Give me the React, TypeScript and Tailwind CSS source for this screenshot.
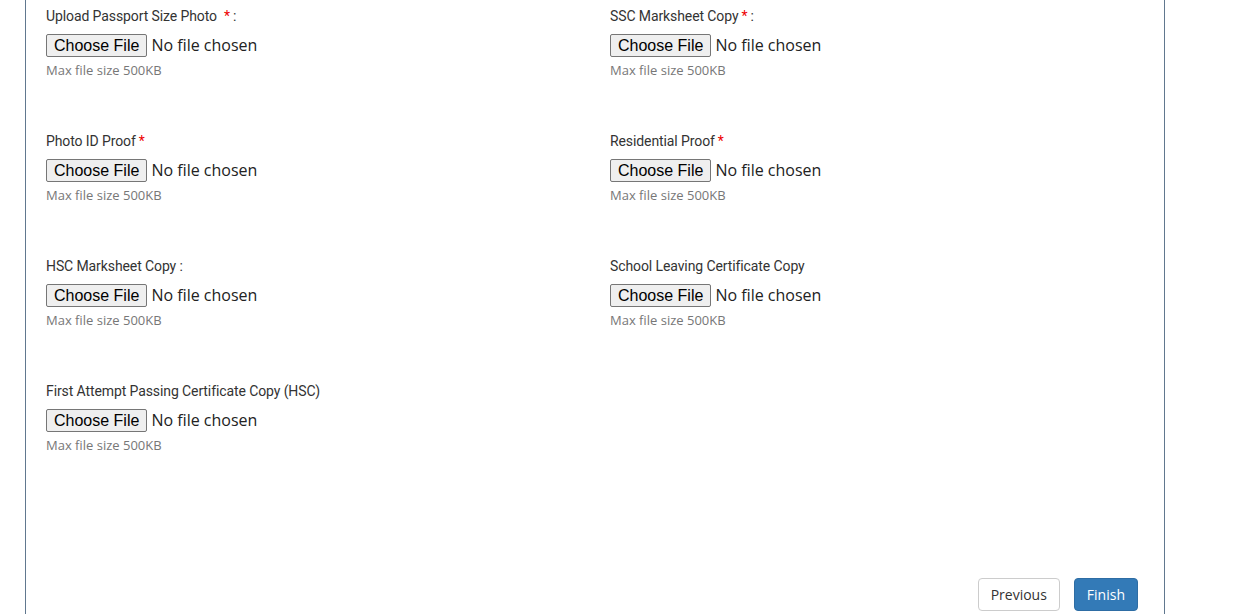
const fields = [
  { label: "Upload Passport Size Photo", mark: " *", tail: ":" , gap: true },
  { label: "SSC Marksheet Copy", mark: "*", tail: " :" },
  { label: "Photo ID Proof", mark: "*", tail: "" },
  { label: "Residential Proof", mark: "*", tail: "" },
  { label: "HSC Marksheet Copy :", mark: "", tail: "" },
  { label: "School Leaving Certificate Copy", mark: "", tail: "" },
  { label: "First Attempt Passing Certificate Copy (HSC)", mark: "", tail: "" },
]

function FileField({ label, mark, tail, gap }: { label: string; mark: string; tail: string; gap?: boolean }) {
  return (
    <div className="h-[125px]">
      <label className="block h-5 font-['Roboto',sans-serif] text-[14px] leading-5 tracking-[-0.1px] text-[#333]">
        {label}
        {mark && <span className={"text-[#e00] " + (gap ? "ml-[7px]" : "ml-[3px]")}>*</span>}
        {tail && <span className="ml-[3px]">{tail.trim()}</span>}
      </label>
      <input
        type="file"
        className="mt-2 block h-[24px] w-[300px] font-['Open_Sans',sans-serif] text-[16px] leading-[23px] text-[#222] file:mr-1 file:h-[23px] file:rounded-[2px] file:border file:border-solid file:border-[#767676] file:bg-[#efefef] file:px-[7px] file:font-['Liberation_Sans',sans-serif] file:text-[16px] file:leading-[19px] file:text-black"
      />
      <p className="mt-[3px] font-['Open_Sans',sans-serif] text-[13px] leading-[18px] text-[#777]">
        Max file size 500KB
      </p>
    </div>
  )
}

export default function App() {
  return (
    <div className="h-[614px] overflow-hidden bg-white">
      <div className="ml-[25px] w-[1140px] border-x border-[#61788f] pl-5 pr-5 pt-[6px]">
        <div className="grid grid-cols-[564px_1fr]">
          {fields.map(f => (
            <FileField key={f.label} {...f} />
          ))}
        </div>
        <div className="mt-[72px] flex justify-end gap-[14px] pr-[6px]">
          <button className="h-[33px] rounded-[4px] border border-[#ccc] bg-white px-3 font-['Open_Sans',sans-serif] text-[14px] text-[#333]">
            Previous
          </button>
          <button className="h-[33px] rounded-[4px] border border-[#2e6da4] bg-[#337ab7] px-3 font-['Open_Sans',sans-serif] text-[14px] text-white">
            Finish
          </button>
        </div>
        <div className="h-10" />
      </div>
    </div>
  )
}
